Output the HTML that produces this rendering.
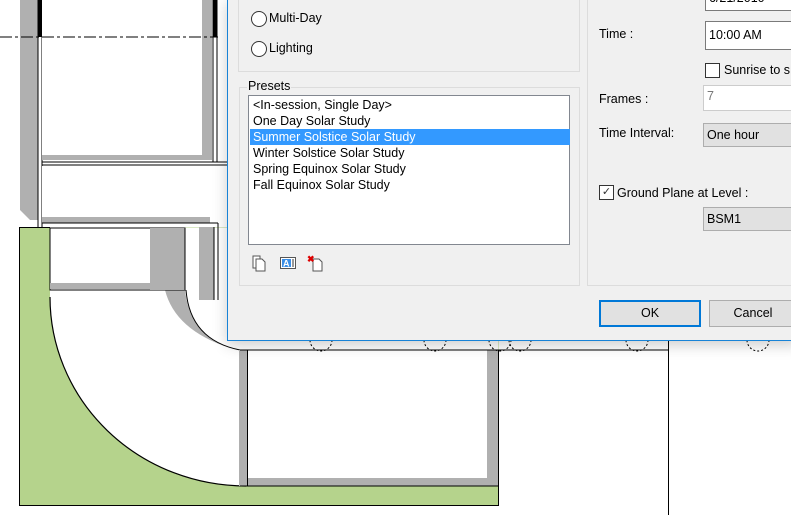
<!DOCTYPE html>
<html><head><style>
body{margin:0;width:791px;height:515px;overflow:hidden;background:#fff;position:relative;font-family:"Liberation Sans",sans-serif;font-size:12.5px;color:#000}
.a{position:absolute}
.dlg{position:absolute;left:227px;top:-2px;width:570px;height:341px;background:#f0f0f0;border:1px solid #1883d7;box-shadow:0 4px 14px rgba(0,0,0,.2)}
.gb{position:absolute;border:1px solid #dcdcdc}
.rad{position:absolute;width:14px;height:14px;border:1px solid #333;border-radius:50%;background:#fff}
.inp{position:absolute;background:#fff;border:1px solid #7a7a7a;box-sizing:border-box;padding:5px 3px}
.cmb{position:absolute;background:#e1e1e1;border:1px solid #adadad;box-sizing:border-box;padding:5px 3px}
.li{position:absolute;left:3px;height:16px;line-height:16px;width:317px;padding-left:1px}
</style></head><body>
<svg class="a" style="left:0;top:0" width="791" height="515">
<rect x="20" y="0" width="18" height="220" fill="#b0b0b0"/>
<polygon points="20,210 38,228 20,228" fill="#fff"/>
<rect x="38" y="0" width="4" height="230" fill="#fff" stroke="#000" stroke-width="1"/>
<rect x="38" y="0" width="4" height="37" fill="#000"/>
<rect x="42" y="0" width="171" height="160" fill="#fff"/>
<rect x="42" y="155" width="160" height="5" fill="#b0b0b0"/>
<rect x="202" y="0" width="10" height="160" fill="#b0b0b0"/>
<rect x="213" y="0" width="4" height="162" fill="#fff" stroke="#000" stroke-width="1"/>
<rect x="213" y="0" width="4" height="37" fill="#000"/>
<line x1="42" y1="162" x2="230" y2="162" stroke="#000"/>
<line x1="42" y1="165" x2="230" y2="165" stroke="#000"/>
<rect x="42" y="166" width="188" height="57" fill="#fff"/>
<rect x="42" y="217" width="168" height="6" fill="#b0b0b0"/>
<line x1="42" y1="223" x2="218" y2="223" stroke="#000"/>
<line x1="0" y1="37" x2="218" y2="37" stroke="#000" stroke-dasharray="12,3,3,3"/>
<rect x="19.5" y="227.5" width="479" height="278" fill="#b5d38c"/>
<path d="M50,228 H498 V350 H248 V486 A196,189 0 0 1 50,297 Z" fill="#fff"/>
<path d="M50,227.5 H19.5 V505.5 H498.5 V350" fill="none" stroke="#000"/>
<path d="M150,228 H185 V290 Q190,335 230,348 Q175,330 165,290 H150 Z" fill="#b0b0b0"/>
<rect x="199" y="227" width="15" height="73" fill="#b0b0b0"/>
<line x1="218" y1="223" x2="218" y2="300" stroke="#000"/>
<line x1="214" y1="227" x2="214" y2="300" stroke="#000"/>
<rect x="50" y="228" width="135" height="62" fill="#fff" stroke="#000"/>
<rect x="50" y="283" width="100" height="6" fill="#b0b0b0"/>
<rect x="150" y="228" width="35" height="62" fill="#b0b0b0"/>
<line x1="185" y1="228" x2="185" y2="290" stroke="#000"/>
<path d="M50,297 A196,189 0 0 0 246,486" fill="none" stroke="#000" stroke-width="1.2"/>
<path d="M186,290 Q190,340 240,350" fill="none" stroke="#000"/>
<rect x="239" y="350" width="259" height="136" fill="#b0b0b0"/>
<rect x="248" y="350" width="239" height="128" fill="#fff"/>
<line x1="247.5" y1="350" x2="247.5" y2="486" stroke="#000"/>
<line x1="240" y1="486" x2="498" y2="486" stroke="#000"/>
<line x1="240" y1="350" x2="668" y2="350" stroke="#000"/>
<line x1="668.5" y1="340" x2="668.5" y2="515" stroke="#000"/>
<g fill="none" stroke="#000" stroke-dasharray="2,2"><circle cx="321" cy="340" r="11"/><circle cx="435" cy="340" r="11"/><circle cx="500" cy="340" r="11"/><circle cx="520" cy="340" r="11"/><circle cx="637" cy="340" r="11"/><circle cx="758" cy="340" r="11"/></g>
</svg>
<div class="dlg">
 <div class="gb" style="left:10px;top:-10px;width:340px;height:81px"></div>
 <div class="rad" style="left:23px;top:12px"></div><div class="a" style="left:41px;top:12px">Multi-Day</div>
 <div class="rad" style="left:23px;top:42px"></div><div class="a" style="left:41px;top:42px">Lighting</div>
 <div class="gb" style="left:11px;top:88px;width:339px;height:197px"></div>
 <div class="a" style="left:19px;top:80px;background:#f0f0f0;padding:0 1px">Presets</div>
 <div class="a" style="left:20px;top:96px;width:320px;height:148px;background:#fff;border:1px solid #828790">
  <div class="li" style="top:1px">&lt;In-session, Single Day&gt;</div>
  <div class="li" style="top:17px">One Day Solar Study</div>
  <div class="li" style="top:33px;background:#3399ff;color:#fff;left:1px;padding-left:3px">Summer Solstice Solar Study</div>
  <div class="li" style="top:49px">Winter Solstice Solar Study</div>
  <div class="li" style="top:65px">Spring Equinox Solar Study</div>
  <div class="li" style="top:81px">Fall Equinox Solar Study</div>
 </div>
 <svg class="a" style="left:22px;top:254px" width="80" height="20">
  <path d="M3,3 H10 V15 H3 Z" fill="#fff" stroke="#555"/><path d="M6,6 H12 L15,9 V18 H6 Z" fill="#fff" stroke="#555"/>
  <rect x="30.5" y="4.5" width="15" height="11" fill="#fff" stroke="#555"/><rect x="32" y="6" width="9" height="8" fill="#3a8ee6"/><text x="33" y="13.5" font-size="9" font-weight="bold" fill="#fff" font-family="Liberation Sans">A</text><line x1="43" y1="6" x2="43" y2="14" stroke="#333"/>
  <path d="M63,6 H69 L72,9 V18 H63 Z" fill="#fff" stroke="#555"/><text x="57" y="9" font-size="9" font-weight="bold" fill="#d00" font-family="Liberation Sans">✖</text>
 </svg>
 <div class="gb" style="left:359px;top:-10px;width:220px;height:295px"></div>
 <div class="inp" style="left:477px;top:-10px;width:100px;height:22px;padding-top:1px">6/21/2010</div>
 <div class="a" style="left:371px;top:28px">Time :</div>
 <div class="inp" style="left:477px;top:22px;width:100px;height:29px;padding-top:6px">10:00 AM</div>
 <div class="a" style="left:477px;top:64px;width:13px;height:13px;border:1px solid #333;background:#fff"></div>
 <div class="a" style="left:496px;top:64px">Sunrise to s</div>
 <div class="a" style="left:371px;top:93px">Frames :</div>
 <div class="inp" style="left:475px;top:86px;width:100px;height:26px;border-color:#ccc;color:#777;padding-top:3px">7</div>
 <div class="a" style="left:371px;top:127px">Time Interval:</div>
 <div class="cmb" style="left:475px;top:124px;width:100px;height:24px;padding-top:4px">One hour</div>
 <div class="a" style="left:371px;top:186px;width:13px;height:13px;border:1px solid #333;background:#fff;font-size:11px;line-height:13px;text-align:center;color:#333">✓</div>
 <div class="a" style="left:389px;top:187px">Ground Plane at Level :</div>
 <div class="cmb" style="left:475px;top:208px;width:100px;height:24px;padding-top:4px">BSM1</div>
 <div class="a" style="left:371px;top:301px;width:102px;height:27px;border:2px solid #0078d7;box-sizing:border-box;background:#e1e1e1;text-align:center;line-height:23px">OK</div>
 <div class="a" style="left:481px;top:301px;width:100px;height:27px;border:1px solid #adadad;box-sizing:border-box;background:#e1e1e1;text-align:center;line-height:25px;padding-right:12px">Cancel</div>
</div>
</body></html>
